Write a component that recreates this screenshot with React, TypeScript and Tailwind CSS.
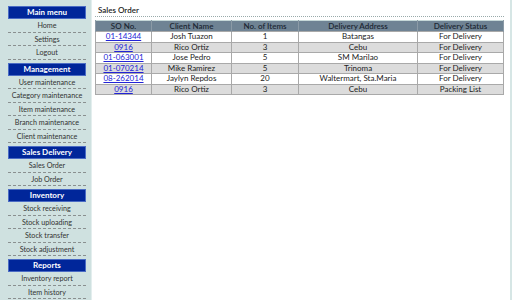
import React from "react";

const menu: { title: string; items: string[] }[] = [
  { title: "Main menu", items: ["Home", "Settings", "Logout"] },
  {
    title: "Management",
    items: [
      "User maintenance",
      "Category maintenance",
      "Item maintenance",
      "Branch maintenance",
      "Client maintenance",
    ],
  },
  { title: "Sales Delivery", items: ["Sales Order", "Job Order"] },
  {
    title: "Inventory",
    items: ["Stock receiving", "Stock uploading", "Stock transfer", "Stock adjustment"],
  },
  { title: "Reports", items: ["Inventory report", "Item history"] },
];

const orders = [
  { so: "01-14344", client: "Josh Tuazon", items: "1", address: "Batangas", status: "For Delivery" },
  { so: "0916", client: "Rico Ortiz", items: "3", address: "Cebu", status: "For Delivery" },
  { so: "01-063001", client: "Jose Pedro", items: "5", address: "SM Marilao", status: "For Delivery" },
  { so: "01-070214", client: "Mike Ramirez", items: "5", address: "Trinoma", status: "For Delivery" },
  { so: "08-262014", client: "Jaylyn Repdos", items: "20", address: "Waltermart, Sta.Maria", status: "For Delivery" },
  { so: "0916", client: "Rico Ortiz", items: "3", address: "Cebu", status: "Packing List" },
];

const Sidebar = () => (
  <div className="w-[92px] shrink-0 bg-[#cfe1e0] pt-[6px] pl-[8px] pr-[5px] border-r border-[#e3eeee]">
    {menu.map((group) => (
      <div key={group.title} className="mb-[3px]">
        <div className="h-[13px] bg-[#00269a] border border-[#4a6bc4] text-white text-[8px] font-bold leading-[11px] text-center whitespace-nowrap">
          {group.title}
        </div>
        {group.items.map((item) => (
          <div
            key={item}
            className="h-[13.5px] border-b border-dashed border-[#8a9090] text-[7.2px] leading-[13px] text-center text-[#333] whitespace-nowrap"
          >
            {item}
          </div>
        ))}
      </div>
    ))}
  </div>
);

const headers = ["SO No.", "Client Name", "No. of Items", "Delivery Address", "Delivery Status"];
const widths = ["w-[56px]", "w-[80px]", "w-[67px]", "w-[119px]", "w-[86px]"];

const App = () => {
  return (
    <div
      className="flex w-[512px] h-[300px] overflow-hidden bg-white"
      style={{ fontFamily: 'Lato, "Open Sans", sans-serif' }}
    >
      <Sidebar />
      <div className="flex-1 pl-[3px] pr-[6px] pt-[3px] border-r-2 border-[#d6e6e5]">
        <div className="h-[14px] pl-[3px] text-[8px] font-semibold leading-[14px] text-[#222] border-b border-dotted border-[#9aa]">
          Sales Order
        </div>
        <table className="mt-[3px] border-collapse text-[8px] text-[#222] border border-[#c6d8d8]">
          <thead>
            <tr className="bg-[#6f8394] h-[11px]">
              {headers.map((h, i) => (
                <th
                  key={h}
                  className={`${widths[i]} font-semibold text-[#1c2733] leading-[10px] border-x border-[#8b9aa6] p-0`}
                >
                  {h}
                </th>
              ))}
            </tr>
          </thead>
          <tbody>
            {orders.map((o, i) => (
              <tr key={i} className={i % 2 === 0 ? "bg-white h-[10.5px]" : "bg-[#dcdcdc] h-[10.5px]"}>
                <td className="border border-[#a9a9a9] text-center leading-[9.5px] p-0">
                  <a href="#" className="text-[#2323d6] underline">
                    {o.so}
                  </a>
                </td>
                <td className="border border-[#a9a9a9] text-center leading-[9.5px] p-0">{o.client}</td>
                <td className="border border-[#a9a9a9] text-center leading-[9.5px] p-0">{o.items}</td>
                <td className="border border-[#a9a9a9] text-center leading-[9.5px] p-0">{o.address}</td>
                <td className="border border-[#a9a9a9] text-center leading-[9.5px] p-0">{o.status}</td>
              </tr>
            ))}
          </tbody>
        </table>
      </div>
    </div>
  );
};

export default App;
